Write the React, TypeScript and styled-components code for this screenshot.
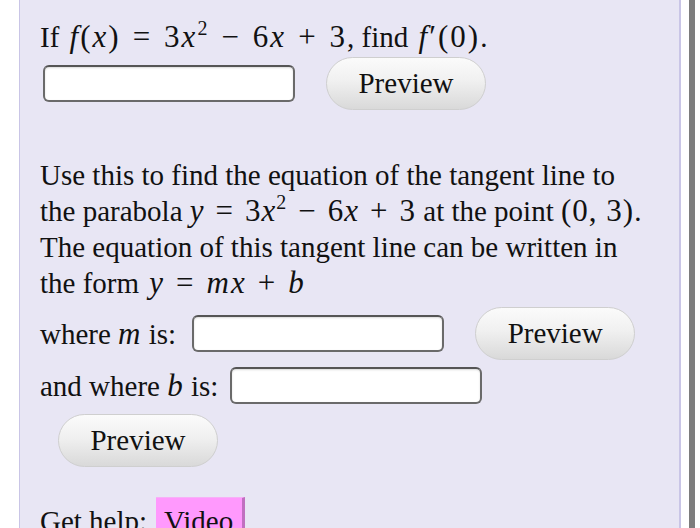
import React from 'react';
import styled, { createGlobalStyle } from 'styled-components';

const GlobalStyle = createGlobalStyle`
    html, body {
        margin: 0;
        padding: 0;
        background: #ffffff;
        overflow: hidden;
    }
`;

const Page = styled.div`
    display: flex;
    flex-direction: row;
    height: 528px;
    width: 700px;
    overflow: hidden;
    font-family: 'Liberation Serif', 'Times New Roman', serif;
    font-size: 29px;
    color: #111111;
`;

const LeftMargin = styled.div`
    width: 19px;
    flex: none;
`;

const Panel = styled.div`
    width: 662px;
    flex: none;
    background: #e8e6f4;
    border-left: 1px solid #c9c5e6;
    border-right: 2px solid #c9c5e6;
    padding: 19px 0 0 20px;
    box-sizing: border-box;
    display: flex;
    flex-direction: column;
`;

const ScrollBar = styled.div`
    width: 6px;
    flex: none;
    margin-left: 8px;
    background: #7d7d7d;
`;

const Line = styled.div`
    line-height: 36px;
    height: 36px;
    white-space: nowrap;
`;

const Paragraph = styled.div`
    margin-top: 47px;
    white-space: nowrap;
`;

/* math set a little larger and looser, like the rendered TeX */
const Math = styled.span<{ $wide?: boolean }>`
    font-size: 31px;
    letter-spacing: ${(p) => (p.$wide ? 2 : 1)}px;
    line-height: 0;
    margin-left: ${(p) => (p.$wide ? 3 : 0)}px;
`;

const V = styled.span`
    font-style: italic;
`;

const Op = styled.span<{ $wide?: boolean }>`
    padding: 0 ${(p) => (p.$wide ? 12 : 11)}px;
`;

const Sup = styled.span`
    font-size: 20px;
    vertical-align: 12px;
    line-height: 0;
`;

const Row = styled.div<{ $top: number; $indent?: number }>`
    display: flex;
    flex-direction: row;
    align-items: center;
    margin-top: ${(p) => p.$top}px;
    padding-left: ${(p) => p.$indent ?? 0}px;
`;

const Label = styled.span<{ $gap: number }>`
    white-space: nowrap;
    line-height: 36px;
    margin-right: ${(p) => p.$gap}px;
`;

const AnswerBox = styled.div`
    width: 252px;
    height: 37px;
    box-sizing: border-box;
    background: #ffffff;
    border: 2px solid #6a6a6a;
    border-top-color: #555555;
    border-radius: 6px;
    box-shadow: inset 0 1px 2px rgba(0, 0, 0, 0.15);
    flex: none;
`;

const PreviewButton = styled.div<{ $gap?: number }>`
    width: 160px;
    height: 53px;
    box-sizing: border-box;
    margin-left: ${(p) => p.$gap ?? 0}px;
    border: 1px solid #cfcfcf;
    border-radius: 27px;
    background: linear-gradient(#fbfbfb, #f0f0f0 45%, #d9d9d9);
    display: flex;
    align-items: center;
    justify-content: center;
    font-size: 29px;
    flex: none;
`;

const HelpRow = styled.div`
    display: flex;
    flex-direction: row;
    align-items: flex-start;
    margin-top: 30px;
    line-height: 48px;
`;

const VideoLink = styled.span`
    display: inline-block;
    margin-left: 9px;
    padding: 0 9px 0 8px;
    background: #ff99fd;
    border-right: 3px solid #c070c0;
    border-top: 1px solid #f7b0f7;
    line-height: 46px;
    height: 40px;
`;

export default function App() {
    return (
        <Page>
            <GlobalStyle />
            <LeftMargin />
            <Panel>
                <Line>
                    If{' '}
                    <Math $wide>
                        <V>f</V>(<V>x</V>)<Op $wide>=</Op>3<V>x</V>
                        <Sup>2</Sup>
                        <Op $wide>−</Op>6<V>x</V>
                        <Op $wide>+</Op>3
                    </Math>
                    , find{' '}
                    <Math $wide>
                        <V>f</V>′(0)
                    </Math>
                    .
                </Line>
                <Row $top={2} $indent={3}>
                    <AnswerBox />
                    <PreviewButton $gap={31}>Preview</PreviewButton>
                </Row>
                <Paragraph>
                    <Line>Use this to find the equation of the tangent line to</Line>
                    <Line>
                        the parabola{' '}
                        <Math>
                            <V>y</V>
                            <Op>=</Op>3<V>x</V>
                            <Sup>2</Sup>
                            <Op>−</Op>6<V>x</V>
                            <Op>+</Op>3
                        </Math>{' '}
                        at the point <Math>(0, 3)</Math>.
                    </Line>
                    <Line>The equation of this tangent line can be written in</Line>
                    <Line>
                        the form{' '}
                        <Math $wide>
                            <V>y</V>
                            <Op>=</Op>
                            <V>mx</V>
                            <Op>+</Op>
                            <V>b</V>
                        </Math>
                    </Line>
                </Paragraph>
                <Row $top={6}>
                    <Label $gap={16}>
                        where{' '}
                        <Math>
                            <V>m</V>
                        </Math>{' '}
                        is:
                    </Label>
                    <AnswerBox />
                    <PreviewButton $gap={31}>Preview</PreviewButton>
                </Row>
                <Row $top={7}>
                    <Label $gap={12}>
                        and where{' '}
                        <Math>
                            <V>b</V>
                        </Math>{' '}
                        is:
                    </Label>
                    <AnswerBox />
                </Row>
                <Row $top={10} $indent={18}>
                    <PreviewButton>Preview</PreviewButton>
                </Row>
                <HelpRow>
                    Get help:
                    <VideoLink>Video</VideoLink>
                </HelpRow>
            </Panel>
            <ScrollBar />
        </Page>
    );
}
